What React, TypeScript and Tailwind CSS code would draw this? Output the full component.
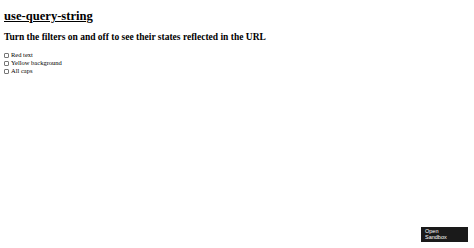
import React, { useState } from "react";

const filters = [
  { key: "red", label: "Red text" },
  { key: "yellow", label: "Yellow background" },
  { key: "caps", label: "All caps" },
];

export default function App() {
  const [state, setState] = useState<Record<string, boolean>>({});

  return (
    <div className="relative h-[248px] w-[474px] bg-white text-black [font-family:'Liberation_Serif',serif]">
      <div className="px-[4px] pt-[8px]">
        <h1 className="text-[12.6px] font-bold leading-[16px] underline">
          use-query-string
        </h1>
        <h2 className="mt-[7px] text-[9.5px] font-bold leading-[12px]">
          Turn the filters on and off to see their states reflected in the URL
        </h2>
        <div className="mt-[8px] flex flex-col text-[6.5px] leading-[8px]">
          {filters.map((f) => (
            <label key={f.key} className="flex items-center">
              <input
                type="checkbox"
                className="m-0 mr-[2px] h-[5px] w-[5px] appearance-none rounded-[1px] border-[0.75px] border-[#767676] bg-white checked:bg-[#0075ff]"
                checked={!!state[f.key]}
                onChange={(e) =>
                  setState((s) => ({ ...s, [f.key]: e.target.checked }))
                }
              />
              {f.label}
            </label>
          ))}
        </div>
      </div>
      <button className="absolute bottom-[6px] right-[6px] w-[47px] bg-[#1a1a1a] px-[4px] py-[1px] text-left text-[5.5px] leading-[1.2] text-white [font-family:'Liberation_Sans',sans-serif]">
        Open
        <br />
        Sandbox
      </button>
    </div>
  );
}
